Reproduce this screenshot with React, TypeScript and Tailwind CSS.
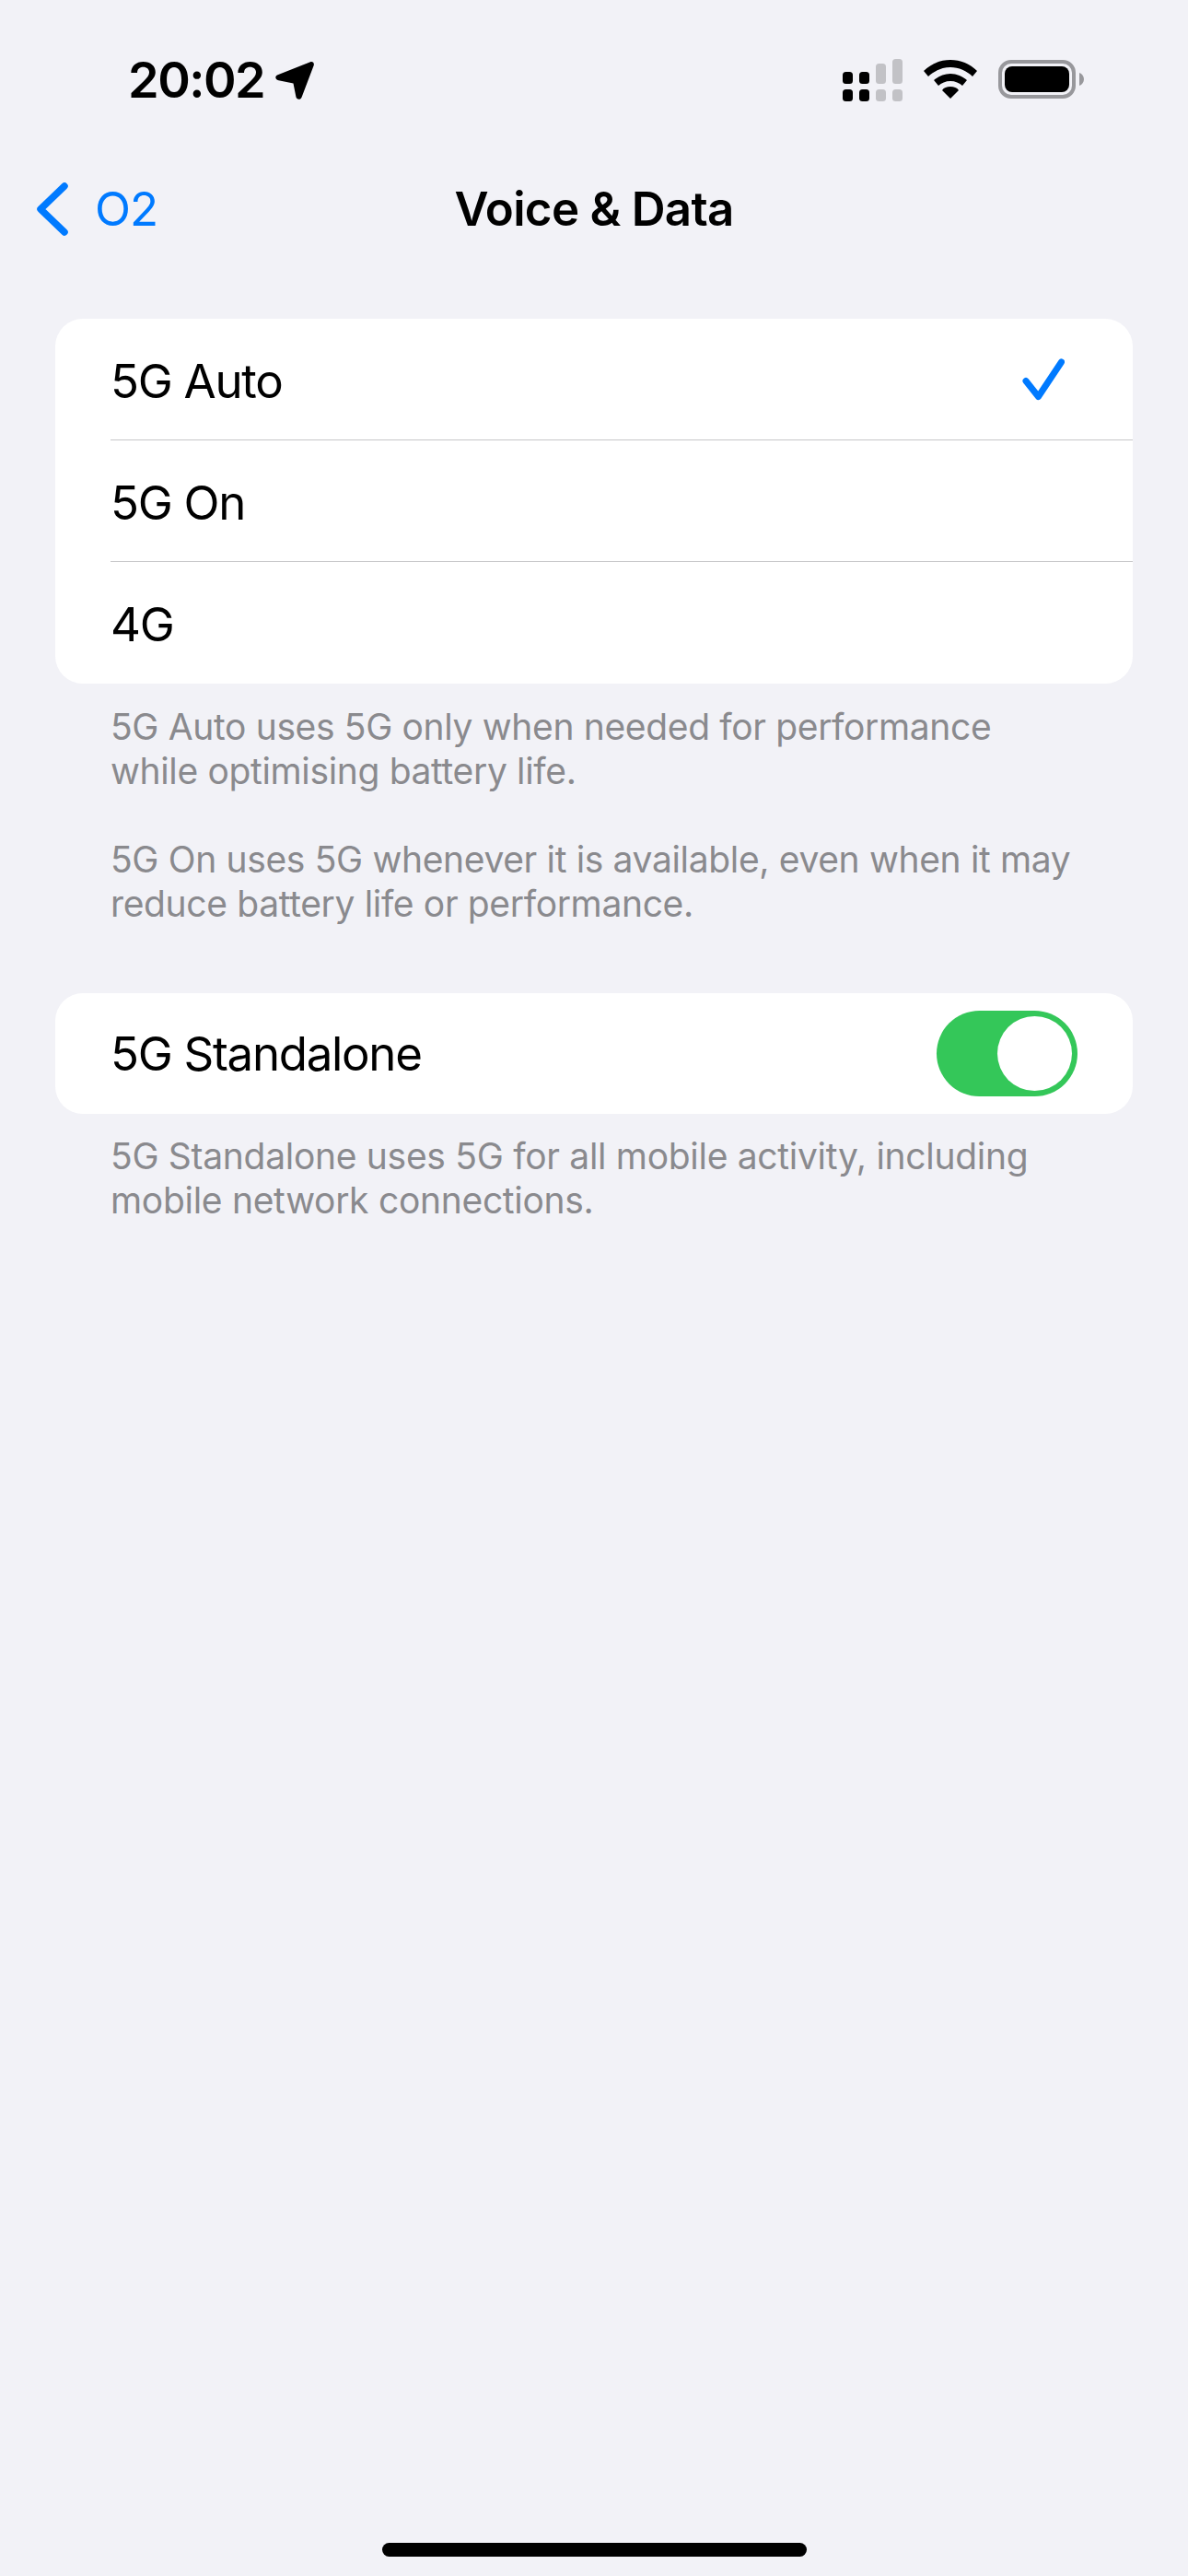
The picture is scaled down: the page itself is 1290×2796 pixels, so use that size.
import React from 'react';

const sans = 'font-["Inter","Liberation_Sans",sans-serif]';

const SignalIcon = () => (
  <svg width="65" height="46" viewBox="0 0 65 46">
    <rect x="0" y="14" width="11" height="13" rx="3.5" fill="#000" />
    <rect x="18" y="14" width="11" height="13" rx="3.5" fill="#000" />
    <rect x="36" y="5" width="11" height="22" rx="3.5" fill="#c2c2c6" />
    <rect x="54" y="0" width="11" height="27" rx="3.5" fill="#c2c2c6" />
    <rect x="0" y="33" width="11" height="13" rx="3.5" fill="#000" />
    <rect x="18" y="33" width="11" height="13" rx="3.5" fill="#000" />
    <rect x="36" y="33" width="11" height="13" rx="3.5" fill="#c2c2c6" />
    <rect x="54" y="33" width="11" height="13" rx="3.5" fill="#c2c2c6" />
  </svg>
);

const WifiIcon = () => (
  <svg width="58" height="42" viewBox="0 0 58 42">
    <path d="M29 0C18 0 8 4 0 12l5 6c6-6 15-10 24-10s18 4 24 10l5-6C50 4 40 0 29 0Z" fill="#000" />
    <path d="M29 15c-7 0-13 3-18 7l5 6c3-3 8-5 13-5s10 2 13 5l5-6c-5-4-11-7-18-7Z" fill="#000" />
    <path d="M29 29c-4 0-7 1-9 4l9 9 9-9c-2-3-5-4-9-4Z" fill="#000" />
  </svg>
);

const BatteryIcon = () => (
  <svg width="93" height="42" viewBox="0 0 93 42">
    <rect x="2" y="2" width="80" height="38" rx="12" fill="none" stroke="#98989c" strokeWidth="4" />
    <rect x="7" y="7" width="70" height="28" rx="8" fill="#000" />
    <path d="M88 14c3 1 5 4 5 7s-2 6-5 7Z" fill="#98989c" />
  </svg>
);

const LocationArrow = () => (
  <svg width="42" height="41" viewBox="0 0 42 41">
    <path
      d="M38 0.3c2.600-.8 4.500 1.200 3.700 3.700L28.600 38.500c-1.200 3.300-5.500 3.100-6.200-.4L19.500 23.500 3.500 20.300C-.3 19.500-.9 15.600 2.600 14.200Z"
      fill="#000"
    />
  </svg>
);

const BackChevron = () => (
  <svg width="34" height="58" viewBox="0 0 34 58">
    <path d="M30 4 4 29l26 25" fill="none" stroke="#007aff" strokeWidth="7.500" strokeLinecap="round" strokeLinejoin="round" />
  </svg>
);

const CheckMark = () => (
  <svg width="46" height="46" viewBox="0 0 46 46">
    <path d="M4 24.500 17.500 41.500 42.500 4" fill="none" stroke="#007aff" strokeWidth="7" strokeLinecap="round" strokeLinejoin="round" />
  </svg>
);

const Toggle = () => (
  <div className="flex h-[93px] w-[153px] items-center justify-end rounded-full bg-[#34c759] pr-[6px]">
    <div className="h-[81px] w-[81px] rounded-full bg-white" />
  </div>
);

const options = [
  { label: '5G Auto', selected: true },
  { label: '5G On', selected: false },
  { label: '4G', selected: false },
];

export default function App() {
  return (
    <div className={`flex h-[2796px] w-[1290px] flex-col bg-[#f2f2f7] text-black ${sans}`}>
      {/* Status bar */}
      <div className="flex items-start justify-between pl-[139px] pr-[113px] pt-[64px]">
        <div className="flex items-center gap-[12px]">
          <span className="text-[54px] leading-[46px] font-semibold tracking-[-1.5px]">20:02</span>
          <LocationArrow />
        </div>
        <div className="flex items-start gap-[23px]">
          <SignalIcon />
          <div className="mt-px">
            <WifiIcon />
          </div>
          <div className="mt-px">
            <BatteryIcon />
          </div>
        </div>
      </div>

      {/* Navigation bar */}
      <div className="relative mt-[87px] flex h-[60px] items-center justify-center">
        <div className="absolute left-[40px] top-0 flex h-full items-center gap-[29px] text-[#007aff]">
          <BackChevron />
          <span className="text-[51px] tracking-[-1px]">O2</span>
        </div>
        <span className="text-[51px] font-semibold tracking-[-0.7px]">Voice &amp; Data</span>
      </div>

      <div className="mt-[89px] flex flex-col px-[60px]">
        <div className="flex flex-col rounded-[30px] bg-white pl-[60px]">
          {options.map((option, i) => (
            <div
              key={option.label}
              className={`flex h-[132px] items-center justify-between pr-[74px] text-[51px] tracking-[-1.3px] ${
                i < options.length - 1 ? 'border-b border-[#c6c6c8]' : ''
              }`}
            >
              <span className="mt-[5px]">{option.label}</span>
              {option.selected && <CheckMark />}
            </div>
          ))}
        </div>

        <div className="flex flex-col gap-[48px] px-[60px] pt-[23px] text-[39px] leading-[48px] tracking-[-0.35px] text-[#8a8a8e]">
          <p>
            5G Auto uses 5G only when needed for performance
            <br />
            while optimising battery life.
          </p>
          <p>
            5G On uses 5G whenever it is available, even when it may
            <br />
            reduce battery life or performance.
          </p>
        </div>

        <div className="mt-[73px] flex h-[131px] items-center justify-between rounded-[30px] bg-white pl-[60px] pr-[60px] text-[51px] tracking-[-1.3px]">
          <span className="mt-[2px]">5G Standalone</span>
          <Toggle />
        </div>

        <p className="px-[60px] pt-[22px] text-[39px] leading-[48px] tracking-[-0.3px] text-[#8a8a8e]">
          5G Standalone uses 5G for all mobile activity, including
          <br />
          mobile network connections.
        </p>
      </div>

      {/* Home indicator */}
      <div className="mt-auto flex justify-center pb-[21px]">
        <div className="h-[15px] w-[461px] rounded-full bg-black" />
      </div>
    </div>
  );
}
